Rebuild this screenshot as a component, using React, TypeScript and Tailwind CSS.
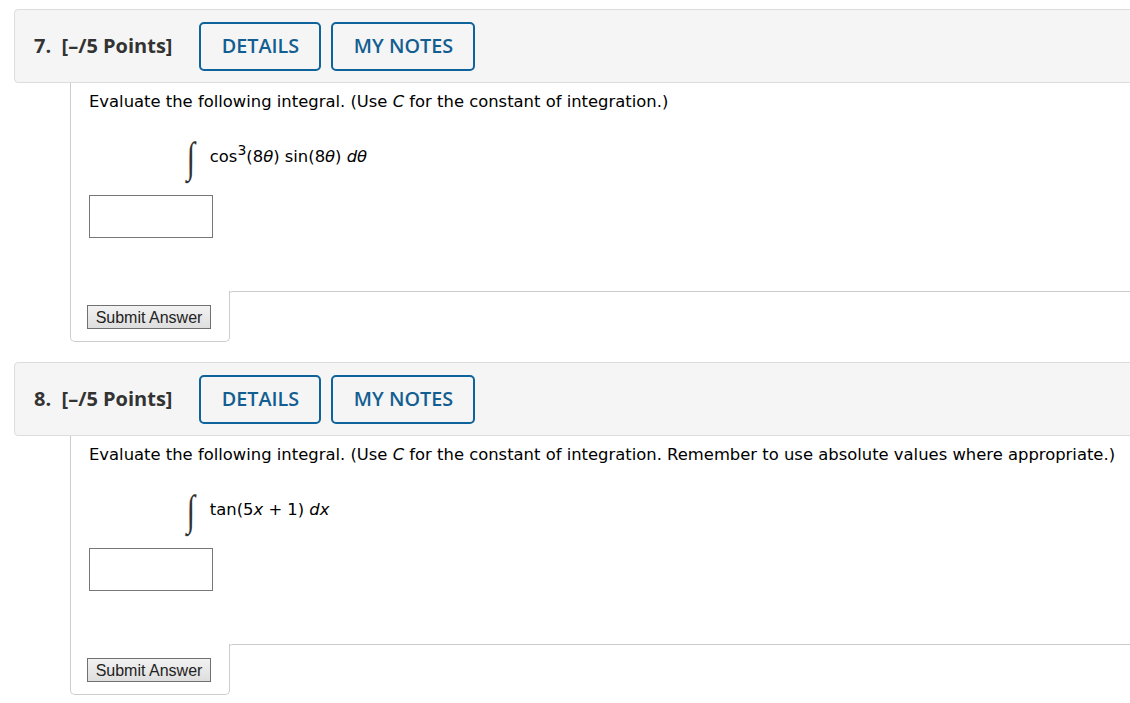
import { ReactNode } from "react";

function Question({
  num,
  prompt,
  expr,
}: {
  num: number;
  prompt: ReactNode;
  expr: ReactNode;
}) {
  return (
    <div className="ml-[14px]">
      {/* Header bar */}
      <div className="w-[1130px] h-[74px] bg-[#f5f5f5] border border-[#dddddd] rounded-[4px] flex items-center pl-[19px]">
        <span className="font-['Open_Sans',sans-serif] font-bold text-[20px] text-[#333333]">
          {num}.&nbsp; [–/5 Points]
        </span>
        <button className="ml-[27px] w-[122px] h-[49px] border-2 border-[#0f639b] rounded-[5px] font-['Open_Sans',sans-serif] font-semibold text-[19.8px] text-[#135e91]">
          DETAILS
        </button>
        <button className="ml-[10px] w-[144px] h-[49px] border-2 border-[#0f639b] rounded-[5px] font-['Open_Sans',sans-serif] font-semibold text-[19.8px] text-[#135e91]">
          MY NOTES
        </button>
      </div>

      {/* Body */}
      <div className="ml-[56px] font-['DejaVu_Sans',Verdana,sans-serif] text-[16.4px] text-black">
        <div className="border-l border-[#cccccc] pl-[18px] pt-[9px] pb-[53px]">
          <p className="leading-[20px]">{prompt}</p>
          <div className="mt-[25px] ml-[96px] flex items-center h-[44px]">
            <span className="font-['Liberation_Serif',serif] text-[43px] leading-[44px] text-[#333] scale-x-[0.7] -mt-[2px]">
              ∫
            </span>
            <span className="ml-[13px] leading-[20px] -mt-[4px]">{expr}</span>
          </div>
          <div className="mt-[14px] w-[124px] h-[43px] border border-[#777777] bg-white" />
        </div>
        <div className="flex">
          <div className="w-[160px] border-l border-b border-r border-[#cccccc] rounded-b-[5px] pl-[16px] pt-[14px] pb-[12px]">
            <button className="block w-[124px] h-[24px] border border-[#707070] bg-gradient-to-b from-[#f2f2f2] to-[#dedede] font-['Liberation_Sans',Arial,sans-serif] text-[16px] text-[#222] leading-[23px]">
              Submit Answer
            </button>
          </div>
          <div className="flex-1 -ml-px border-t border-[#cccccc] rounded-tl-[4px]" />
        </div>
      </div>
    </div>
  );
}

export default function App() {
  return (
    <div className="w-[1130px] h-[703px] overflow-hidden bg-white pt-[9px]">
      <Question
        num={7}
        prompt={
          <>
            Evaluate the following integral. (Use <i>C</i> for the constant of integration.)
          </>
        }
        expr={
          <>
            cos<span className="text-[14px] relative -top-[7px]">3</span>(8<i>θ</i>) sin(8<i>θ</i>) <i>dθ</i>
          </>
        }
      />
      <div className="h-[20px]" />
      <Question
        num={8}
        prompt={
          <>
            Evaluate the following integral. (Use <i>C</i> for the constant of integration. Remember to use absolute values where appropriate.)
          </>
        }
        expr={
          <>
            tan(5<i>x</i> + 1) <i>dx</i>
          </>
        }
      />
    </div>
  );
}
